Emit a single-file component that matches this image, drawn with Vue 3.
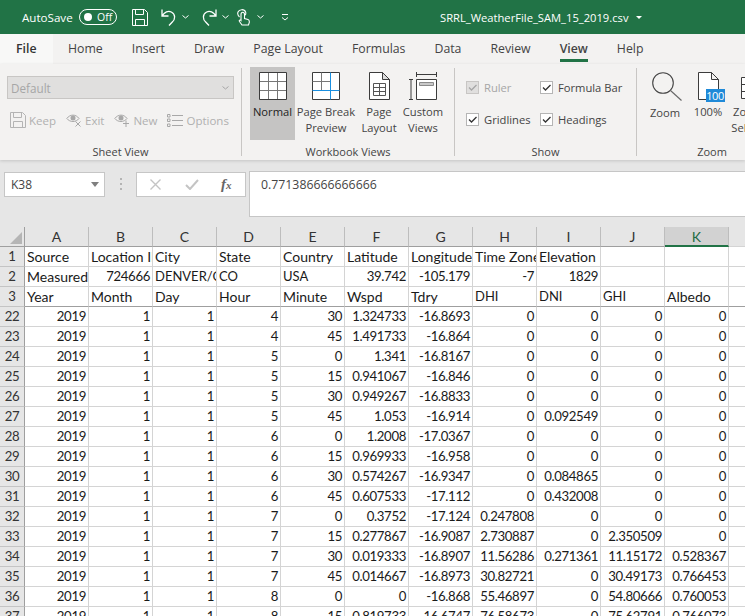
<script setup>
const tabs = ['Home', 'Insert', 'Draw', 'Page Layout', 'Formulas', 'Data', 'Review', 'View', 'Help']
const cols = ['A', 'B', 'C', 'D', 'E', 'F', 'G', 'H', 'I', 'J', 'K']
const head = [
  { n: 1, c: ['Source', 'Location ID', 'City', 'State', 'Country', 'Latitude', 'Longitude', 'Time Zone', 'Elevation', '', ''] },
  { n: 2, c: ['Measured', 724666, 'DENVER/CENTENNIAL', 'CO', 'USA', 39.742, -105.179, -7, 1829, '', ''] },
  { n: 3, c: ['Year', 'Month', 'Day', 'Hour', 'Minute', 'Wspd', 'Tdry', 'DHI', 'DNI', 'GHI', 'Albedo'] }
]
const data = [
  [22, 4, 30, '1.324733', '-16.8693', 0, 0, 0, 0],
  [23, 4, 45, '1.491733', '-16.864', 0, 0, 0, 0],
  [24, 5, 0, '1.341', '-16.8167', 0, 0, 0, 0],
  [25, 5, 15, '0.941067', '-16.846', 0, 0, 0, 0],
  [26, 5, 30, '0.949267', '-16.8833', 0, 0, 0, 0],
  [27, 5, 45, '1.053', '-16.914', 0, '0.092549', 0, 0],
  [28, 6, 0, '1.2008', '-17.0367', 0, 0, 0, 0],
  [29, 6, 15, '0.969933', '-16.958', 0, 0, 0, 0],
  [30, 6, 30, '0.574267', '-16.9347', 0, '0.084865', 0, 0],
  [31, 6, 45, '0.607533', '-17.112', 0, '0.432008', 0, 0],
  [32, 7, 0, '0.3752', '-17.124', '0.247808', 0, 0, 0],
  [33, 7, 15, '0.277867', '-16.9087', '2.730887', 0, '2.350509', 0],
  [34, 7, 30, '0.019333', '-16.8907', '11.56286', '0.271361', '11.15172', '0.528367'],
  [35, 7, 45, '0.014667', '-16.8973', '30.82721', 0, '30.49173', '0.766453'],
  [36, 8, 0, 0, '-16.868', '55.46897', 0, '54.80666', '0.760053'],
  [37, 8, 15, '0.819733', '-16.6747', '76.58673', 0, '75.62791', '0.766073']
].map(r => ({ n: r[0], c: [2019, 1, 1, ...r.slice(1)] }))
const rows = [...head, ...data]
const isNum = v => typeof v === 'number' || /^-?[0-9.]+$/.test(v)
const isCaps = v => /^[A-Z/]+$/.test(v)
</script>

<template>
  <div class="app">
    <header class="title">
      <span class="autosave">AutoSave</span>
      <span class="toggle"><i></i><b>Off</b></span>
      <svg class="save" width="16" height="17" viewBox="0 0 16 17"><path d="M.5.5h12l3 3v13H.5zM3.500.5v5h8v-5M3.500 16.500v-6h9v6" fill="none" stroke="#fff"/></svg>
      <svg class="undo" width="16" height="18" viewBox="0 0 16 18"><path d="M1 1.500v6.500h6.500M1.300 7.800c2-3.800 6-5.300 9-3.800 4.500 2.200 4 7.500 1 10L8 17.500" fill="none" stroke="#fff" stroke-width="1.300"/></svg>
      <svg class="c" width="7" height="4" viewBox="0 0 7 4"><path d="M.5.500l3 2.500 3-2.500" fill="none" stroke="#fff"/></svg>
      <svg class="redo" width="16" height="18" viewBox="0 0 16 18"><path d="M15 1.500v6.500H8.500M14.700 7.800c-2-3.800-6-5.300-9-3.800-4.500 2.200-4 7.500-1 10L8 17.500" fill="none" stroke="#fff" stroke-width="1.300"/></svg>
      <svg class="c" width="7" height="4" viewBox="0 0 7 4"><path d="M.5.500l3 2.500 3-2.500" fill="none" stroke="#fff"/></svg>
      <svg class="touch" width="13" height="18" viewBox="0 0 13 18"><path d="M2.500 9C.8 7.500.3 5.800 1 4 2.200 1 7.500.8 8.600 4c.4 1.300.2 2.400-.4 3.300M4 6.500c0-3 3.500-3 3.500 0v4l3.500 1c1.500.5 1.500 1.500 1.300 3l-.8 2.500H5L2.500 13.500c-.7-1 .5-2 1.500-1z" fill="none" stroke="#fff" stroke-width="1.100"/></svg>
      <svg class="c" width="7" height="4" viewBox="0 0 7 4"><path d="M.5.500l3 2.500 3-2.500" fill="none" stroke="#fff"/></svg>
      <svg class="more" width="8" height="7" viewBox="0 0 8 7"><path d="M1 .5h6M1 3.500l3 2.500 3-2.500" fill="none" stroke="#fff"/></svg>
      <span class="filename">SRRL_WeatherFile_SAM_15_2019.csv</span>
      <svg class="fcaret" width="6" height="3" viewBox="0 0 6 3"><path d="M0 0h6L3 3z" fill="#fff"/></svg>
    </header>

    <nav class="tabs">
      <span class="file">File</span>
      <div class="tablist">
        <span v-for="t in tabs" :key="t" class="tab" :class="{ active: t === 'View' }">{{ t }}</span>
      </div>
    </nav>

    <section class="ribbon">
      <div class="group g-sheet">
        <div class="gbody sheet">
          <div class="combo"><span>Default</span>
            <svg width="7" height="4" viewBox="0 0 7 4"><path d="M.5.500l3 2.500 3-2.500" fill="none" stroke="#a6a6a6"/></svg>
          </div>
          <div class="sheetbtns">
            <span class="sb"><svg width="16" height="16" viewBox="0 0 16 16"><path d="M.5.500h12l3 3v12H.5zM3.500.5v5h8v-5M3.500 15.500v-6h9v6" fill="none" stroke="#b4b4b4"/></svg>Keep</span>
            <span class="sb"><svg width="16" height="14" viewBox="0 0 16 14"><path d="M.8 5.500C4 1 10 1 13 5.500 10 9.500 4 9.500.8 5.500z" fill="none" stroke="#a8a8a8"/><circle cx="7" cy="5" r="2.500" fill="#a8a8a8"/><path d="M9.500 8.500l5 5M14.500 8.500l-5 5" stroke="#a8a8a8"/></svg>Exit</span>
            <span class="sb"><svg width="16" height="14" viewBox="0 0 16 14"><path d="M.8 5.500C4 1 10 1 13 5.500 10 9.500 4 9.500.8 5.500z" fill="none" stroke="#a8a8a8"/><circle cx="7" cy="5" r="2.500" fill="#a8a8a8"/><path d="M12 7.500v6.500M9 10.500h6" stroke="#a8a8a8"/></svg>New</span>
            <span class="sb"><svg width="16" height="13" viewBox="0 0 16 13"><path d="M5 1.500h11M5 6.500h11M5 11.500h11" stroke="#a8a8a8"/><path d="M.5.500h2.500v2.500H.5zM.5 5h2.500v2.500H.5zM.5 10h2.500v2.500H.5z" fill="none" stroke="#a8a8a8"/></svg>Options</span>
          </div>
        </div>
        <div class="glabel">Sheet View</div>
      </div>
      <div class="sep"></div>

      <div class="group g-book">
        <div class="gbody book">
          <div class="big normal">
            <svg width="28" height="28" viewBox="0 0 28 28"><path d="M.5.500h27v27H.5z" fill="#fff"/><path d="M9.500.5v27M18.500.5v27M.5 9.500h27M.5 18.500h27" stroke="#777"/><path d="M.5.500h27v27H.5z" fill="none" stroke="#3c3c3c"/></svg>
            <span>Normal</span>
          </div>
          <div class="big pb">
            <svg width="28" height="28" viewBox="0 0 28 28"><path d="M.5.500h27v27H.5z" fill="#fff" stroke="#3c3c3c"/><path d="M9.500.5v18M.5 9.500h18" stroke="#777"/><path d="M18.500.5v27M.5 18.500h27" stroke="#1a8fe0"/></svg>
            <span>Page Break<br>Preview</span>
          </div>
          <div class="big pl">
            <svg width="21" height="28" viewBox="0 0 21 28"><path d="M.5.500h13l7 7v20H.5z" fill="#fff" stroke="#3c3c3c"/><path d="M13.500.5v7h7z" fill="#dcdcdc" stroke="#3c3c3c"/><path d="M4.500 11.500h12v12h-12zM4.500 15.500h12M4.500 19.500h12M10.500 11.500v12" fill="none" stroke="#555"/></svg>
            <span>Page<br>Layout</span>
          </div>
          <div class="big cv">
            <svg width="28" height="28" viewBox="0 0 28 28"><path d="M7.500 2.500h20M7.500 0v5M27.500 0v5M0 7.500h4M0 27.500h4M2 7.500v20" fill="none" stroke="#3c3c3c"/><path d="M7.500 7.500h20v20h-20z" fill="#fff" stroke="#3c3c3c"/><path d="M10.500 10.500h14v3h-14z" fill="#c8c8c8" stroke="#8a8a8a"/></svg>
            <span>Custom<br>Views</span>
          </div>
        </div>
        <div class="glabel">Workbook Views</div>
      </div>
      <div class="sep"></div>

      <div class="group g-show">
        <div class="gbody show">
          <label class="chk dis"><i><svg width="13" height="13" viewBox="0 0 13 13"><path d="M3 6.500l2.500 2.500 5-5" fill="none" stroke="#a6a6a6" stroke-width="1.300"/></svg></i>Ruler</label>
          <label class="chk"><i><svg width="13" height="13" viewBox="0 0 13 13"><path d="M3 6.500l2.500 2.500 5-5" fill="none" stroke="#333" stroke-width="1.300"/></svg></i>Formula Bar</label>
          <label class="chk"><i><svg width="13" height="13" viewBox="0 0 13 13"><path d="M3 6.500l2.500 2.500 5-5" fill="none" stroke="#333" stroke-width="1.300"/></svg></i>Gridlines</label>
          <label class="chk"><i><svg width="13" height="13" viewBox="0 0 13 13"><path d="M3 6.500l2.500 2.500 5-5" fill="none" stroke="#333" stroke-width="1.300"/></svg></i>Headings</label>
        </div>
        <div class="glabel">Show</div>
      </div>
      <div class="sep"></div>

      <div class="group g-zoom">
        <div class="gbody zoom">
          <div class="big z1">
            <svg width="30" height="29" viewBox="0 0 30 29"><circle cx="11" cy="11" r="10.300" fill="none" stroke="#444" stroke-width="1.100"/><path d="M18.500 18.500L29.500 28.500" stroke="#666" stroke-width="1.100"/></svg>
            <span>Zoom</span>
          </div>
          <div class="big z2">
            <div class="pageicon">
              <svg width="21" height="28" viewBox="0 0 21 28"><path d="M.5.500h13l7 7v20H.5z" fill="#fff" stroke="#3c3c3c"/><path d="M13.500.5v7h7z" fill="#f3f2f1" stroke="#3c3c3c"/></svg>
              <b>100</b>
            </div>
            <span>100%</span>
          </div>
          <div class="big z3">
            <svg width="28" height="28" viewBox="0 0 28 28"><path d="M.5 5.500h27v21H.5zM.5 12.500h27M.5 19.500h27M9.500 5.500v21" fill="#fff" stroke="#3c3c3c"/></svg>
            <span>Zoom to<br>Selection</span>
          </div>
        </div>
        <div class="glabel">Zoom</div>
      </div>
    </section>

    <section class="fbar">
      <div class="namebox"><span>K38</span><svg width="8" height="5" viewBox="0 0 8 5"><path d="M0 0h8L4 5z" fill="#7f7f7f"/></svg></div>
      <div class="dots"><i></i><i></i><i></i></div>
      <div class="fnbox">
        <svg width="11" height="11" viewBox="0 0 11 11"><path d="M.5.500l10 10M10.500.5l-10 10" stroke="#c4c4c4" stroke-width="1.400"/></svg>
        <svg width="14" height="11" viewBox="0 0 14 11"><path d="M1 6l4 4 8-9" fill="none" stroke="#c4c4c4" stroke-width="2"/></svg>
        <em>f<small>x</small></em>
      </div>
      <div class="finput">0.771386666666666</div>
    </section>

    <section class="sheetgrid">
      <div class="corner"><svg width="12" height="12" viewBox="0 0 12 12"><path d="M12 0v12H0z" fill="#b5b5b5"/></svg></div>
      <div v-for="c in cols" :key="c" class="colh" :class="{ sel: c === 'K' }">{{ c }}</div>
      <div class="tail colt"></div>
      <template v-for="r in rows" :key="r.n">
        <div class="rowh">{{ r.n }}</div>
        <div v-for="(v, i) in r.c" :key="i" class="cell" :class="{ num: isNum(v), caps: isCaps(v), sep3: r.n === 3 }">{{ v }}</div>
        <div class="tail" :class="{ sep3: r.n === 3 }"></div>
      </template>
    </section>
  </div>
</template>

<style>
html, body { margin: 0; background: #fff; }
</style>

<style scoped>
.app { width: 745px; height: 616px; overflow: hidden; background: #e6e6e6; font-family: "Open Sans", "Noto Sans", sans-serif; color: #444; }
.title { height: 34px; background: #217346; display: flex; align-items: center; color: #fff; font-size: 11.600px; box-sizing: border-box; padding-left: 22px; }
.title svg { flex: none; }
.autosave { width: 57px; }
.toggle { border: 1px solid #fff; border-radius: 9px; display: flex; align-items: center; box-sizing: border-box; width: 38px; height: 16px; padding-left: 4px; gap: 5px; font-size: 10.500px; }
.toggle i { width: 8px; height: 8px; border-radius: 50%; background: #fff; }
.toggle b { font-weight: 400; }
.save { margin-left: 15px; }
.undo { margin-left: 13px; }
.c { margin-left: 5px; }
.redo { margin-left: 12px; }
.touch { margin-left: 8px; }
.touch + .c { margin-left: 7px; }
.more { margin-left: 17px; }
.filename { margin-left: 151px; font-size: 11.200px; white-space: nowrap; }
.fcaret { margin-left: 7px; }
.tabs { height: 30px; background: #f3f2f1; display: flex; font-size: 12.300px; }
.file { width: 53px; box-sizing: border-box; padding-left: 16px; height: 30px; line-height: 30px; background: #f8f8f7; color: #333; font-weight: 600; }
.tablist { display: flex; gap: 29px; padding-left: 15px; }
.tab { height: 30px; line-height: 30px; position: relative; white-space: nowrap; }
.tab.active { font-weight: 600; }
.tab.active::after { content: ""; position: absolute; left: 0; right: 0; bottom: 2px; height: 3px; background: #217346; }

.ribbon { height: 96px; background: #f3f2f1; display: flex; box-shadow: 0 1px 3px rgba(0, 0, 0, .15); position: relative; font-size: 11.200px; }
.sep { width: 1px; height: 88px; margin-top: 4px; background: #c8c6c4; flex: none; }
.group { display: flex; flex-direction: column; flex: none; }
.gbody { height: 80px; position: relative; box-sizing: border-box; }
.glabel { text-align: center; font-size: 11px; height: 16px; line-height: 16px; white-space: nowrap; }
.g-sheet { width: 241px; }
.g-book { width: 212px; }
.g-show { width: 181px; }
.g-zoom { width: 150px; }

.sheet { padding: 12px 0 0 7px; }
.combo { width: 227px; height: 23px; box-sizing: border-box; border: 1px solid #c8c6c4; background: #e0dfde; color: #a6a6a6; display: flex; align-items: center; justify-content: space-between; padding: 0 4px 0 3px; font-size: 11.700px; }
.sheetbtns { display: flex; align-items: center; margin-top: 10px; margin-left: 3px; height: 22px; color: #b0b0b0; font-size: 11.500px; }
.sb { display: flex; align-items: center; gap: 3px; margin-right: 10px; }

.book { display: flex; padding: 3px 0 0 8px; }
.big { display: flex; flex-direction: column; align-items: center; text-align: center; line-height: 16px; flex: none; box-sizing: border-box; white-space: nowrap; }
.big > svg, .pageicon { flex: none; margin-top: 5px; margin-bottom: 4px; }
.normal { width: 45px; height: 73px; background: #c5c4c3; color: #222; }
.pb { width: 62px; }
.pl { width: 44px; }
.cv { width: 44px; }
.show { display: grid; grid-template-columns: 74px auto; grid-template-rows: 32px 32px; padding: 7px 0 0 11px; }
.chk { display: flex; align-items: center; gap: 5px; white-space: nowrap; height: 32px; }
.chk i { border: 1px solid #b5b5b5; background: #fff; display: block; flex: none; width: 11px; height: 11px; position: relative; }
.chk i svg { position: absolute; left: -1px; top: -1px; }
.chk.dis { color: #a6a6a6; }
.chk.dis i { background: #e0dfde; border-color: #c8c6c4; }
.zoom { display: flex; padding-top: 3px; }
.z1 { width: 56px; }
.z1 > svg { margin-left: 3px; }
.z2 { width: 30px; }
.z3 { width: 48px; margin-left: 8px; }
.pageicon { position: relative; width: 21px; height: 28px; }
.pageicon svg { display: block; }
.pageicon b { position: absolute; left: 8px; top: 17px; width: 19px; height: 13px; background: #1f8ad8; color: #fff; font-weight: 400; font-size: 11px; line-height: 13px; text-align: center; letter-spacing: -.5px; }

.fbar { height: 67px; display: flex; align-items: flex-start; box-sizing: border-box; padding-top: 12px; }
.namebox { width: 101px; height: 25px; margin-left: 4px; box-sizing: border-box; border: 1px solid #c6c6c6; background: #fff; display: flex; align-items: center; justify-content: space-between; padding: 0 5px 0 6px; font-size: 12px; flex: none; }
.dots { width: 31px; display: flex; flex-direction: column; align-items: center; gap: 3px; padding-top: 6px; flex: none; }
.dots i { width: 2px; height: 2px; background: #b4b4b4; }
.fnbox { width: 110px; height: 25px; box-sizing: border-box; border: 1px solid #c6c6c6; background: #fff; display: flex; align-items: center; padding-left: 13px; flex: none; }
.fnbox svg:nth-child(2) { margin-left: 24px; }
.fnbox em { margin-left: 22px; font-family: "Liberation Serif", serif; font-weight: 700; font-size: 15px; color: #666; }
.fnbox em small { font-size: 11px; }
.finput { margin-left: 3px; flex: 1; height: 46px; box-sizing: border-box; border: 1px solid #c6c6c6; border-right: 0; background: #fff; padding: 3px 0 0 11px; font-size: 12.300px; margin-top: -1px; line-height: 20px; }

.sheetgrid { display: grid; grid-template-columns: 25px repeat(11, 64px) 1fr; grid-auto-rows: 20px; background: #fff; font-family: Lato, "Noto Sans", sans-serif; font-size: 14px; color: #1a1a1a; }
.corner { background: #e6e6e6; border-right: 1px solid #9f9f9f; border-bottom: 1px solid #9f9f9f; box-sizing: border-box; display: flex; align-items: flex-end; justify-content: flex-end; padding: 0 2px 2px 0; }
.colh { background: #e6e6e6; border-right: 1px solid #bdbdbd; border-bottom: 1px solid #9f9f9f; box-sizing: border-box; text-align: center; line-height: 19px; color: #333; }
.colh.sel { background: #d2d2d2; border-bottom: 2px solid #217346; color: #1f6b42; }
.colt { background: #e6e6e6; border-bottom: 1px solid #9f9f9f; box-sizing: border-box; }
.rowh { background: #e6e6e6; border-right: 1px solid #9f9f9f; border-bottom: 1px solid #c4c4c4; box-sizing: border-box; text-align: center; line-height: 19px; color: #333; font-size: 13.200px; letter-spacing: -.3px; }
.cell { border-right: 1px solid #d4d4d4; border-bottom: 1px solid #d4d4d4; box-sizing: border-box; line-height: 19px; padding: 0 2px; overflow: hidden; white-space: nowrap; }
.cell.num { text-align: right; font-size: 13.200px; letter-spacing: -.35px; }
.cell.caps { font-size: 13px; }
.tail { border-bottom: 1px solid #d4d4d4; box-sizing: border-box; }
.sep3 { border-bottom-color: #9f9f9f; }
</style>
